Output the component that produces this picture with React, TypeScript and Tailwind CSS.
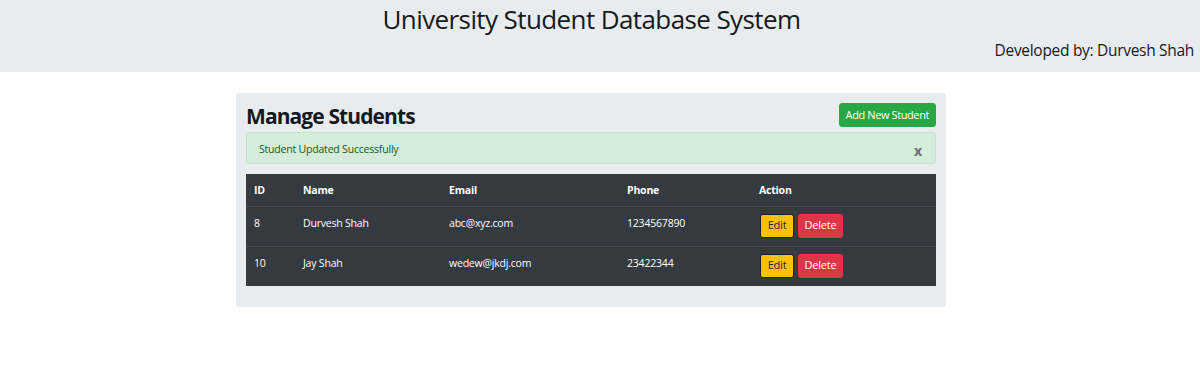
import React from "react";

const students = [
  { id: 8, name: "Durvesh Shah", email: "abc@xyz.com", phone: "1234567890" },
  { id: 10, name: "Jay Shah", email: "wedew@jkdj.com", phone: "23422344" },
];

export default function App() {
  return (
    <div className="min-h-[369px] w-[1200px] bg-white" style={{ fontFamily: '"Open Sans", "Noto Sans", sans-serif' }}>
      <header className="h-[72px] bg-[#e9ecef] text-[#16191c]">
        <h1 className="w-[1183px] pt-[3px] text-center text-[26px] leading-[32px] tracking-[-0.6px]">
          University Student Database System
        </h1>
        <p className="mt-[4px] pr-[6px] text-right text-[15.5px] leading-[22px] tracking-[-0.3px]">
          Developed by: Durvesh Shah
        </p>
      </header>

      <main className="ml-[236px] mt-[21px] w-[710px] rounded-[3px] bg-[#e9ecef] px-[10px] pb-[21px] pt-[10px]">
        <div className="flex h-[24px] items-start justify-between">
          <h2 className="mt-[-1px] text-[21px] font-bold leading-[28px] tracking-[-0.9px] text-[#16191c]">Manage Students</h2>
          <button className="h-[24px] rounded-[3px] border border-[#28a745] bg-[#28a745] px-[6px] text-[11px] leading-[20px] tracking-[-0.4px] text-white">
            Add New Student
          </button>
        </div>

        <div className="mt-[5px] flex h-[32px] items-center justify-between rounded-[3px] border border-[#c3e6cb] bg-[#d4edda] pl-[12px] pr-[13px] text-[#155724]">
          <span className="pt-[3px] text-[10.5px] tracking-[-0.2px]">Student Updated Successfully</span>
          <span className="pt-[4px] text-[14px] font-bold text-[#6c6f70]">x</span>
        </div>

        <table className="mt-[10px] w-[690px] table-fixed border-collapse bg-[#343a40] text-[10.5px] tracking-[-0.2px] text-white">
          <colgroup>
            <col className="w-[49px]" />
            <col className="w-[146px]" />
            <col className="w-[178px]" />
            <col className="w-[132px]" />
            <col />
          </colgroup>
          <thead>
            <tr className="h-[32px] border-b border-[#454d55] text-left">
              <th className="pl-[8px] pt-[3px] font-bold">ID</th>
              <th className="pl-[8px] pt-[3px] font-bold">Name</th>
              <th className="pl-[8px] pt-[3px] font-bold">Email</th>
              <th className="pl-[8px] pt-[3px] font-bold">Phone</th>
              <th className="pl-[8px] pt-[3px] font-bold">Action</th>
            </tr>
          </thead>
          <tbody>
            {students.map((s, i) => (
              <tr key={s.id} className={i === 0 ? "h-[40px] border-b border-[#454d55]" : "h-[40px]"}>
                <td className="pl-[8px] align-top pt-[9px]">{s.id}</td>
                <td className="pl-[8px] align-top pt-[9px]">{s.name}</td>
                <td className="pl-[8px] align-top pt-[9px]">{s.email}</td>
                <td className="pl-[8px] align-top pt-[9px]">{s.phone}</td>
                <td className="pl-[9px] align-top pt-[7px]">
                  <div className="flex gap-[4px]">
                    <button className="h-[24px] w-[34px] rounded-[3px] border border-[#1d2124] bg-[#ffc107] text-[11px] text-[#212529]">
                      Edit
                    </button>
                    <button className="h-[24px] w-[45px] rounded-[3px] bg-[#dc3545] text-[11px] text-white">
                      Delete
                    </button>
                  </div>
                </td>
              </tr>
            ))}
          </tbody>
        </table>
      </main>
    </div>
  );
}
